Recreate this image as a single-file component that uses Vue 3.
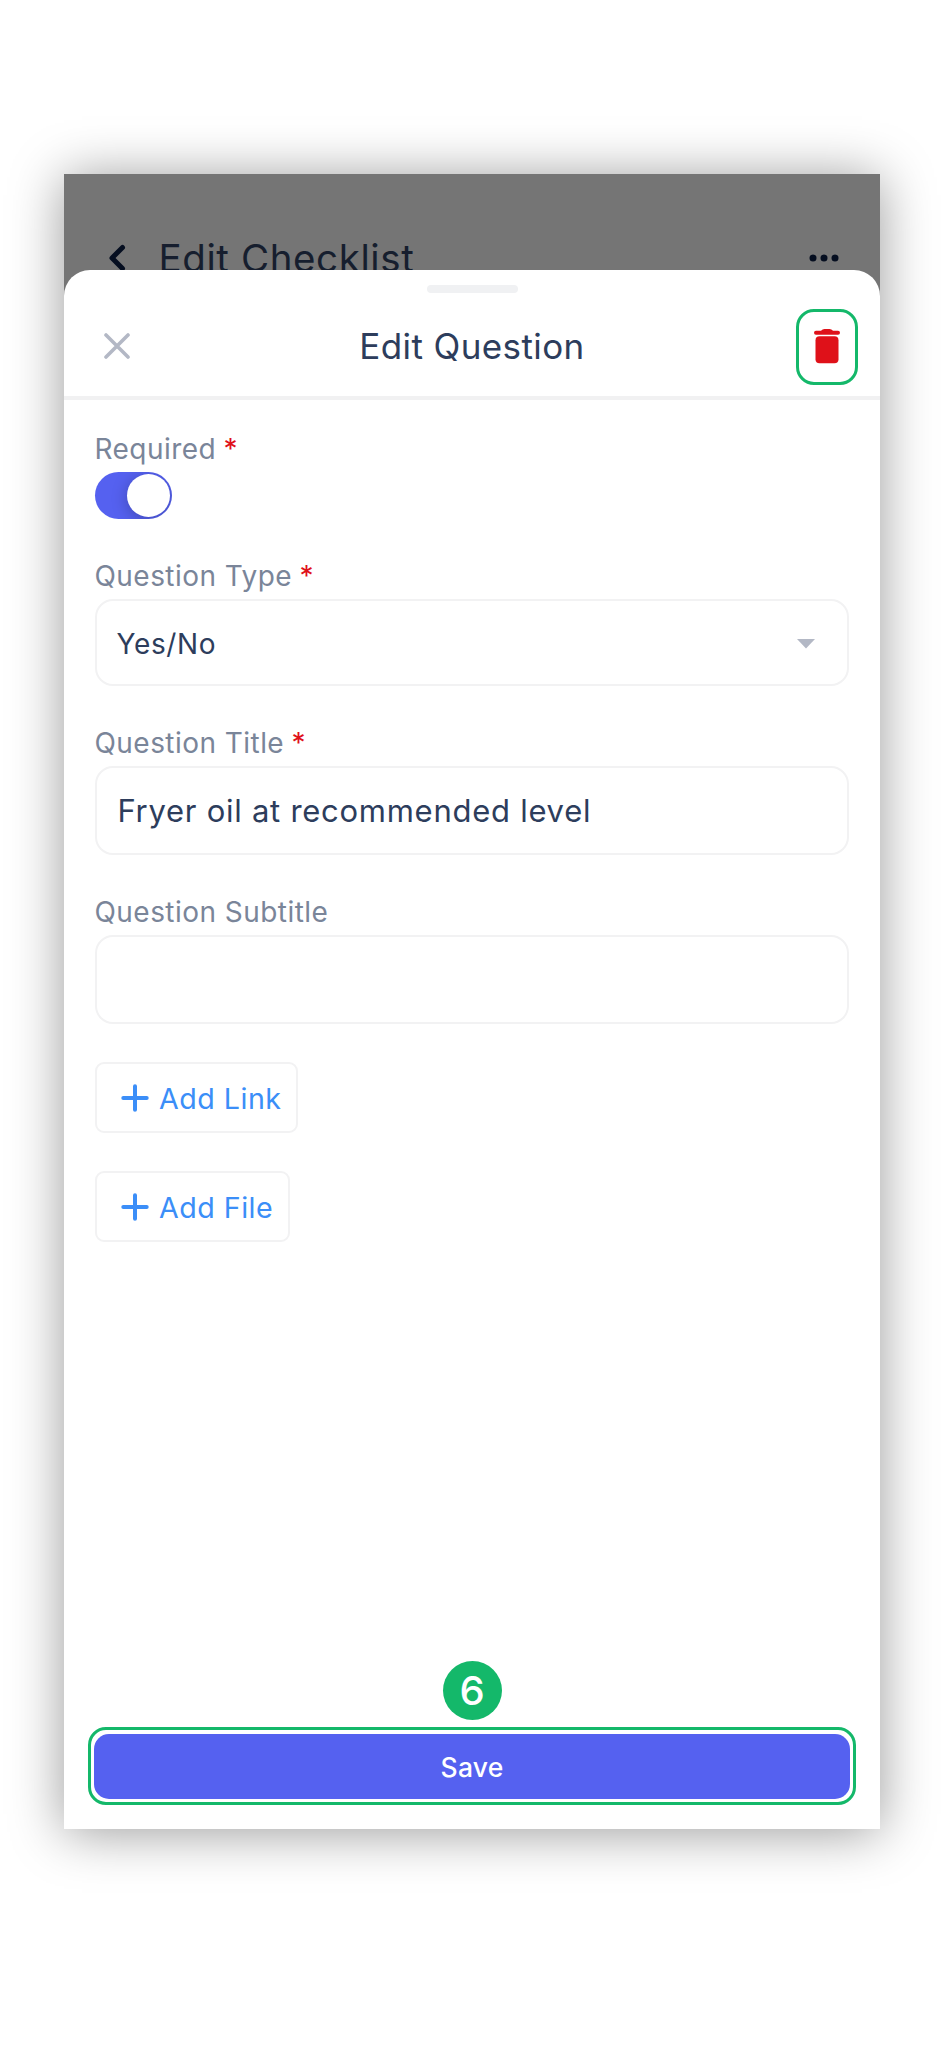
<template>
  <div class="page">
    <div class="phone">
      <div class="topbar">
        <svg class="back" width="20" height="30" viewBox="0 0 20 30" fill="none">
          <path d="M15.500 4.500 5 15 15.500 25.500" stroke="#050e20" stroke-width="5" stroke-linecap="round" stroke-linejoin="round" />
        </svg>
        <span class="topbar-title">Edit Checklist</span>
        <svg class="dots" width="30" height="8" viewBox="0 0 30 8" fill="#050e20">
          <circle cx="4" cy="4" r="3.5" />
          <circle cx="15" cy="4" r="3.5" />
          <circle cx="26" cy="4" r="3.5" />
        </svg>
      </div>

      <div class="sheet">
        <div class="handle"></div>
        <div class="sheet-header">
          <button class="close" aria-label="Close">
            <svg width="26" height="26" viewBox="0 0 26 26" fill="none">
              <path d="M2 2 24 24M24 2 2 24" stroke="#b3b8c5" stroke-width="3.6" stroke-linecap="round" />
            </svg>
          </button>
          <h2>Edit Question</h2>
          <button class="delete" aria-label="Delete">
            <svg width="26" height="35" viewBox="0 0 26 35" fill="#df1119">
              <path d="M2 1.800H7Q8.500 0 10.500 0H15.500Q17.500 0 19 1.800H24A2 2 0 0 1 24 5.800H2A2 2 0 0 1 2 1.800Z" />
              <rect x="1.500" y="7.300" width="23" height="27" rx="4" />
            </svg>
          </button>
        </div>

        <div class="form">
          <div class="field required">
            <label>Required <span class="star">*</span></label>
            <div class="toggle" :class="{ on: required }" @click="required = !required">
              <div class="knob"></div>
            </div>
          </div>

          <div class="field type">
            <label>Question Type <span class="star">*</span></label>
            <div class="select">
              <span>{{ type }}</span>
              <svg width="18" height="10" viewBox="0 0 18 10" fill="#b3b8c5">
                <path d="M0 0H18L9 9.500Z" />
              </svg>
            </div>
          </div>

          <div class="field title">
            <label>Question Title <span class="star">*</span></label>
            <input v-model="title" type="text" aria-label="Question Title" />
          </div>

          <div class="field subtitle">
            <label>Question Subtitle</label>
            <input v-model="subtitle" type="text" aria-label="Question Subtitle" />
          </div>

          <button v-for="item in attachments" :key="item" class="add">
            <svg width="28" height="28" viewBox="0 0 28 28" fill="none">
              <path d="M14 2.300V25.700M2.300 14H25.700" stroke="#3b8ef8" stroke-width="4" stroke-linecap="round" />
            </svg>
            <span>{{ item }}</span>
          </button>
        </div>

        <div class="footer">
          <div class="step">6</div>
          <div class="save-outline">
            <button class="save">Save</button>
          </div>
        </div>
      </div>
    </div>
  </div>
</template>

<script setup>
import { ref } from 'vue'

const required = ref(true)
const type = ref('Yes/No')
const title = ref('Fryer oil at recommended level')
const subtitle = ref('')
const attachments = ['Add Link', 'Add File']
</script>

<style>
body {
  margin: 0;
  background: #fff;
}
</style>

<style scoped>
.page {
  box-sizing: border-box;
  width: 944px;
  height: 2048px;
  padding: 173.5px 64px 0;
  font-family: Inter, "Liberation Sans", sans-serif;
  color: #2d3d5c;
}
.page * {
  box-sizing: border-box;
}
.phone {
  display: flex;
  flex-direction: column;
  height: 1655px;
  background: #757575;
  box-shadow: 0 3px 50px rgba(0, 0, 0, 0.4);
}
button {
  border: none;
  background: none;
  padding: 0;
  font-family: inherit;
  cursor: pointer;
}
svg {
  display: block;
  flex: none;
}
.topbar {
  display: flex;
  align-items: center;
  height: 96.5px;
  padding: 73px 41px 0 43px;
  overflow: hidden;
}
.topbar-title {
  flex: 1;
  margin-left: 31.5px;
  font-size: 38.5px;
  line-height: 46px;
  letter-spacing: 0.6px;
  color: #161e2e;
}
.sheet {
  flex: 1;
  display: flex;
  flex-direction: column;
  background: #fff;
  border-radius: 26px 26px 0 0;
}
.handle {
  width: 91px;
  height: 8px;
  margin: 15px auto 0;
  border-radius: 4px;
  background: #f0f1f3;
}
.sheet-header {
  display: flex;
  align-items: center;
  justify-content: space-between;
  height: 107px;
  padding: 2px 22px 0 40px;
  border-bottom: 4px solid #f1f1f2;
}
.close {
  width: 62px;
}
h2 {
  margin: 0;
  padding-right: 18px;
  font-size: 35px;
  font-weight: 400;
  line-height: 44px;
  letter-spacing: 0.4px;
}
.delete {
  display: flex;
  align-items: center;
  justify-content: center;
  width: 62px;
  height: 76px;
  margin-top: 3px;
  border: 3px solid #14b86a;
  border-radius: 18px;
}
.delete svg {
  margin-bottom: 2px;
}
.form {
  display: flex;
  flex-direction: column;
  align-items: flex-start;
  padding: 31px 31px 0 30.5px;
}
.field {
  display: flex;
  flex-direction: column;
  width: 100%;
}
label {
  font-size: 28px;
  line-height: 36px;
  letter-spacing: 0.45px;
  color: #7a8599;
}
.star {
  margin-left: -1px;
  color: #df1119;
}
.toggle {
  display: flex;
  align-items: center;
  width: 77px;
  height: 47px;
  margin-top: 5px;
  padding: 2px;
  border-radius: 24px;
  background: #d5d8df;
  overflow: hidden;
}
.toggle.on {
  justify-content: flex-end;
  background: #5561f0;
}
.knob {
  width: 43px;
  height: 43px;
  border-radius: 50%;
  background: #fff;
  box-shadow: 0 3px 16px rgba(0, 0, 0, 0.25);
}
.type {
  margin-top: 39px;
}
.select {
  display: flex;
  align-items: center;
  justify-content: space-between;
  height: 87px;
  margin-top: 5px;
  padding: 2px 32px 0 20px;
  border: 2px solid #f2f2f3;
  border-radius: 18px;
  font-size: 28px;
  letter-spacing: 0.6px;
}
.title {
  margin-top: 39px;
}
input {
  width: 100%;
  height: 89px;
  margin-top: 5px;
  padding: 0 21px 1px;
  border: 2px solid #f2f2f3;
  border-radius: 18px;
  outline: none;
  background: none;
  font-family: inherit;
  font-size: 31px;
  letter-spacing: 0.73px;
  color: inherit;
}
.subtitle {
  margin-top: 39px;
  margin-bottom: 38px;
}
.add {
  display: flex;
  align-items: center;
  height: 71px;
  margin-bottom: 38px;
  padding: 0 15px 0 24px;
  border: 2px solid #f2f2f3;
  border-radius: 9px;
  font-size: 28.6px;
  letter-spacing: 0.5px;
  color: #3b8ef8;
}
.add span {
  margin: 2px 0 0 10.5px;
}
.footer {
  display: flex;
  flex-direction: column;
  align-items: center;
  margin-top: auto;
  padding-bottom: 23.5px;
}
.step {
  width: 59px;
  height: 59px;
  border-radius: 50%;
  background: #14b86a;
  color: #fff;
  font-size: 40px;
  font-weight: 500;
  line-height: 60px;
  text-align: center;
}
.save-outline {
  width: 768px;
  height: 78px;
  margin-top: 7px;
  padding: 4px 3px;
  border: 3px solid #14b86a;
  border-radius: 18px;
}
.save {
  width: 100%;
  height: 65px;
  border-radius: 15px;
  background: #5561f0;
  color: #fff;
  font-size: 26.5px;
  font-weight: 500;
  letter-spacing: 0.2px;
}
</style>
